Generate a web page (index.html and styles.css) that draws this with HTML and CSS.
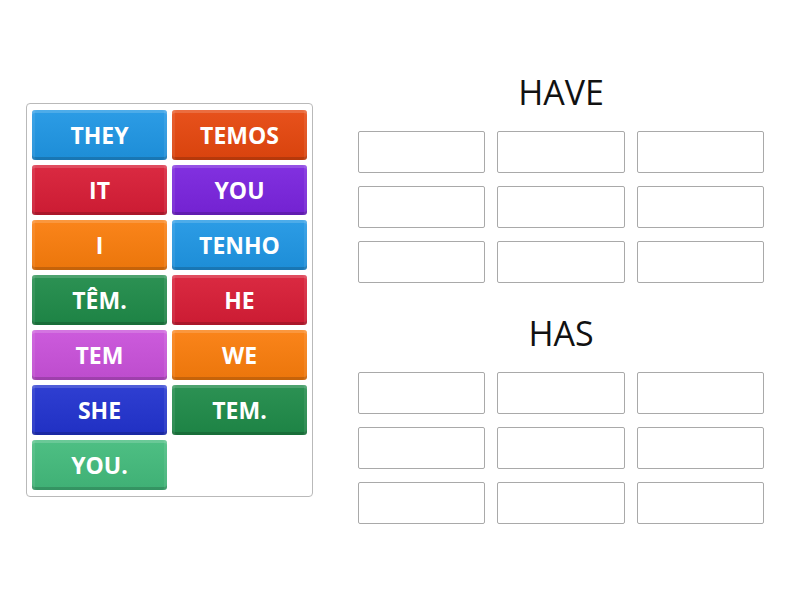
FILE: index.html
```html
<!DOCTYPE html>
<html lang="en">
<head>
    <meta charset="UTF-8">
    <meta name="viewport" content="width=device-width, initial-scale=1.0">
    <title>Group Sort - Have / Has</title>
    <link rel="stylesheet" href="styles.css">
</head>
<body>
    <div class="board">
        <div class="tray">
            <div class="tile blue">THEY</div>
            <div class="tile vermilion">TEMOS</div>
            <div class="tile red">IT</div>
            <div class="tile purple">YOU</div>
            <div class="tile orange">I</div>
            <div class="tile blue">TENHO</div>
            <div class="tile green">TÊM.</div>
            <div class="tile red">HE</div>
            <div class="tile pink">TEM</div>
            <div class="tile orange">WE</div>
            <div class="tile navy">SHE</div>
            <div class="tile green">TEM.</div>
            <div class="tile mint">YOU.</div>
        </div>

        <div class="groups">
            <div class="group">
                <h2 class="group-title">HAVE</h2>
                <div class="slots">
                    <div class="slot"></div><div class="slot"></div><div class="slot"></div>
                    <div class="slot"></div><div class="slot"></div><div class="slot"></div>
                    <div class="slot"></div><div class="slot"></div><div class="slot"></div>
                </div>
            </div>
            <div class="group">
                <h2 class="group-title">HAS</h2>
                <div class="slots">
                    <div class="slot"></div><div class="slot"></div><div class="slot"></div>
                    <div class="slot"></div><div class="slot"></div><div class="slot"></div>
                    <div class="slot"></div><div class="slot"></div><div class="slot"></div>
                </div>
            </div>
        </div>
    </div>
</body>
</html>
```

FILE: styles.css
```css
body { margin: 0; background-color: #fff; font-family: "Open Sans", "Liberation Sans", sans-serif; }
.board { display: flex; align-items: flex-start; gap: 45px; padding-left: 26px; }

/* word tray */
.tray { margin-top: 103px; width: 275px; padding: 6px 5px; border: 1px solid #b9b9b9; border-radius: 4px; display: grid; grid-template-columns: 135px 135px; grid-auto-rows: 50px; gap: 5px; }
.tile { display: flex; align-items: center; justify-content: center; padding-bottom: 1px; border-radius: 3px; color: #fff; font-weight: 700; font-size: 23px;
    background-image: linear-gradient(rgba(255,255,255,0.06), rgba(0,0,0,0.06));
    box-shadow: inset 0 3px 0 rgba(255,255,255,0.16), inset 3px 0 0 rgba(255,255,255,0.08), inset -3px 0 0 rgba(255,255,255,0.08), inset 0 -3px 0 rgba(0,0,0,0.16); }
.blue { background-color: #1f96e4; }
.vermilion { background-color: #e6470e; }
.red { background-color: #d81d36; }
.purple { background-color: #7a24de; }
.orange { background-color: #fa7d0c; }
.green { background-color: #1f8b49; }
.pink { background-color: #c951da; }
.navy { background-color: #2233cf; }
.mint { background-color: #43bb7c; }

/* drop groups */
.groups { width: 406px; margin-top: 71px; }
.group + .group { margin-top: 29px; }
.group-title { margin: 0 0 18px; text-align: center; font-weight: 400; font-size: 34px; line-height: 42px; color: #111; }
.slots { display: grid; grid-template-columns: 127px 128px 127px; grid-auto-rows: 42px; column-gap: 12px; row-gap: 13px; }
.slot { border: 1px solid #a9a9a9; border-radius: 2px; background-color: #fff; }
```
